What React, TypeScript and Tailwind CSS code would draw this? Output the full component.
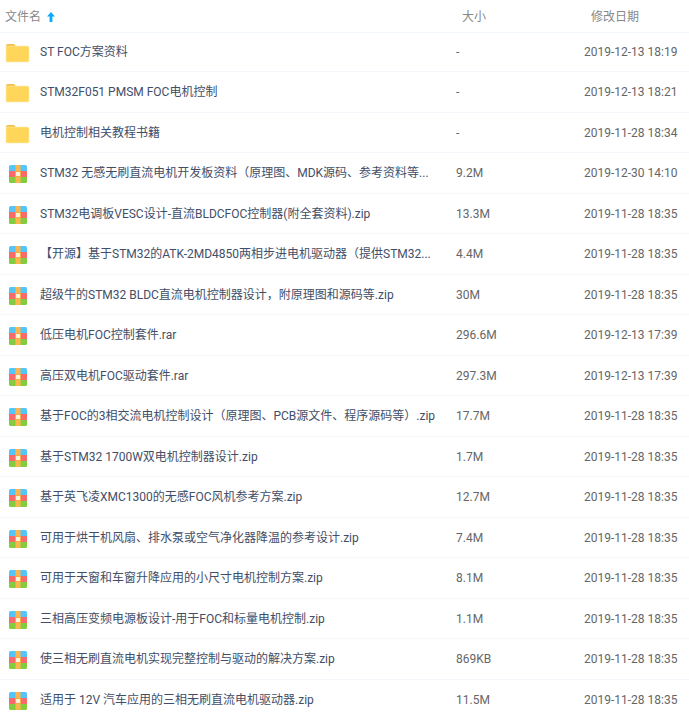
const files = [
  { name: "ST FOC方案资料", size: "-", date: "2019-12-13 18:19", type: "folder" },
  { name: "STM32F051 PMSM FOC电机控制", size: "-", date: "2019-12-13 18:21", type: "folder" },
  { name: "电机控制相关教程书籍", size: "-", date: "2019-11-28 18:34", type: "folder" },
  { name: "STM32 无感无刷直流电机开发板资料（原理图、MDK源码、参考资料等...", size: "9.2M", date: "2019-12-30 14:10", type: "zip" },
  { name: "STM32电调板VESC设计-直流BLDCFOC控制器(附全套资料).zip", size: "13.3M", date: "2019-11-28 18:35", type: "zip" },
  { name: "【开源】基于STM32的ATK-2MD4850两相步进电机驱动器（提供STM32...", size: "4.4M", date: "2019-11-28 18:35", type: "zip" },
  { name: "超级牛的STM32 BLDC直流电机控制器设计，附原理图和源码等.zip", size: "30M", date: "2019-11-28 18:35", type: "zip" },
  { name: "低压电机FOC控制套件.rar", size: "296.6M", date: "2019-12-13 17:39", type: "zip" },
  { name: "高压双电机FOC驱动套件.rar", size: "297.3M", date: "2019-12-13 17:39", type: "zip" },
  { name: "基于FOC的3相交流电机控制设计（原理图、PCB源文件、程序源码等）.zip", size: "17.7M", date: "2019-11-28 18:35", type: "zip" },
  { name: "基于STM32 1700W双电机控制器设计.zip", size: "1.7M", date: "2019-11-28 18:35", type: "zip" },
  { name: "基于英飞凌XMC1300的无感FOC风机参考方案.zip", size: "12.7M", date: "2019-11-28 18:35", type: "zip" },
  { name: "可用于烘干机风扇、排水泵或空气净化器降温的参考设计.zip", size: "7.4M", date: "2019-11-28 18:35", type: "zip" },
  { name: "可用于天窗和车窗升降应用的小尺寸电机控制方案.zip", size: "8.1M", date: "2019-11-28 18:35", type: "zip" },
  { name: "三相高压变频电源板设计-用于FOC和标量电机控制.zip", size: "1.1M", date: "2019-11-28 18:35", type: "zip" },
  { name: "使三相无刷直流电机实现完整控制与驱动的解决方案.zip", size: "869KB", date: "2019-11-28 18:35", type: "zip" },
  { name: "适用于 12V 汽车应用的三相无刷直流电机驱动器.zip", size: "11.5M", date: "2019-11-28 18:35", type: "zip" },
];

const FolderIcon = () => (
  <svg width="25" height="20" viewBox="0 0 25 20" className="ml-[5px]">
    <path d="M1 3a2 2 0 0 1 2-2h6l3 3H1z" fill="#f3bd48" />
    <rect x="1" y="3" width="23" height="16" rx="1.5" fill="#ffd659" stroke="#ffedb0" strokeWidth="0.6" />
  </svg>
);

const ZipIcon = () => (
  <svg width="18" height="18" viewBox="0 0 18 18" className="ml-[9px]">
    <defs>
      <clipPath id="zip-clip">
        <rect width="18" height="18" rx="1.5" />
      </clipPath>
    </defs>
    <g clipPath="url(#zip-clip)">
      <rect width="18" height="6" fill="#55c4f9" />
      <rect y="6" width="18" height="6" fill="#fb6a6a" />
      <rect y="12" width="18" height="6" fill="#84cc3f" />
      <rect x="6.5" width="5" height="18" fill="#fdb64e" />
    </g>
    <rect x="6.5" y="6.5" width="5" height="5" fill="#fff3d6" stroke="#f5a94a" strokeWidth="1" />
  </svg>
);

export default function App() {
  return (
    <div className="w-[689px] h-[717px] overflow-hidden bg-white text-[12px] font-['Roboto','Noto_Sans_CJK_SC',sans-serif]">
      {/* header */}
      <div className="flex items-center h-[33px] pt-[2px] border-b border-[#f2f6fd] text-[#888]">
        <div className="w-[456px] pl-[5px] flex items-center gap-[6px]">
          文件名
          <svg width="8" height="10" viewBox="0 0 8 10">
            <path d="M4 0 8 4.6H5.4V10H2.6V4.6H0z" fill="#09aaff" />
          </svg>
        </div>
        <div className="w-[135px] pl-[6px]">大小</div>
        <div>修改日期</div>
      </div>

      {files.map((file, i) => (
        <div
          key={file.name}
          className={`flex items-center border-b border-[#f4f7fc] text-[#424e67] ${i === 0 ? "h-[39px] pb-[2px]" : "h-[40.5px]"}`}
        >
          <div className="w-[40px] shrink-0 flex mt-[3px]">
            {file.type === "folder" ? <FolderIcon /> : <ZipIcon />}
          </div>
          <div className="w-[416px] shrink-0 truncate pt-[1px]">{file.name}</div>
          <div className="w-[128px] shrink-0 pt-[1px] text-[#666]">{file.size}</div>
          <div className="pt-[1px] text-[#666]">{file.date}</div>
        </div>
      ))}
    </div>
  );
}
